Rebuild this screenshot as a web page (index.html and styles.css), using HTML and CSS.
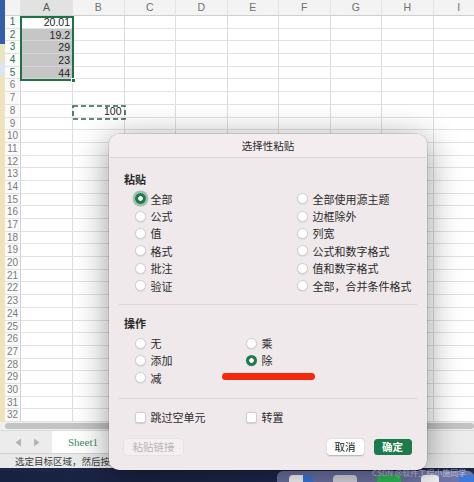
FILE: index.html
```html
<!DOCTYPE html>
<html lang="zh-CN">
<head>
<meta charset="utf-8">
<title>选择性粘贴</title>
<link rel="stylesheet" href="styles.css">
</head>
<body>
<div class="window">
  <div class="main">
    <div class="stripe"></div>
    <div class="grid">
      <div class="row head"><span></span><span class="on">A</span><span>B</span><span>C</span><span>D</span><span>E</span><span>F</span><span>G</span><span>H</span><span>I</span></div>
      <div class="row hl"><span>1</span><span>20.01</span><span></span><span></span><span></span><span></span><span></span><span></span><span></span><span></span></div>
      <div class="row hl sel"><span>2</span><span>19.2</span><span></span><span></span><span></span><span></span><span></span><span></span><span></span><span></span></div>
      <div class="row hl sel"><span>3</span><span>29</span><span></span><span></span><span></span><span></span><span></span><span></span><span></span><span></span></div>
      <div class="row hl sel"><span>4</span><span>23</span><span></span><span></span><span></span><span></span><span></span><span></span><span></span><span></span></div>
      <div class="row hl sel"><span>5</span><span>44</span><span></span><span></span><span></span><span></span><span></span><span></span><span></span><span></span></div>
      <div class="row"><span>6</span><span></span><span></span><span></span><span></span><span></span><span></span><span></span><span></span><span></span></div>
      <div class="row"><span>7</span><span></span><span></span><span></span><span></span><span></span><span></span><span></span><span></span><span></span></div>
      <div class="row"><span>8</span><span></span><span>100</span><span></span><span></span><span></span><span></span><span></span><span></span><span></span></div>
      <div class="row"><span>9</span><span></span><span></span><span></span><span></span><span></span><span></span><span></span><span></span><span></span></div>
      <div class="row"><span>10</span><span></span><span></span><span></span><span></span><span></span><span></span><span></span><span></span><span></span></div>
      <div class="row"><span>11</span><span></span><span></span><span></span><span></span><span></span><span></span><span></span><span></span><span></span></div>
      <div class="row"><span>12</span><span></span><span></span><span></span><span></span><span></span><span></span><span></span><span></span><span></span></div>
      <div class="row"><span>13</span><span></span><span></span><span></span><span></span><span></span><span></span><span></span><span></span><span></span></div>
      <div class="row"><span>14</span><span></span><span></span><span></span><span></span><span></span><span></span><span></span><span></span><span></span></div>
      <div class="row"><span>15</span><span></span><span></span><span></span><span></span><span></span><span></span><span></span><span></span><span></span></div>
      <div class="row"><span>16</span><span></span><span></span><span></span><span></span><span></span><span></span><span></span><span></span><span></span></div>
      <div class="row"><span>17</span><span></span><span></span><span></span><span></span><span></span><span></span><span></span><span></span><span></span></div>
      <div class="row"><span>18</span><span></span><span></span><span></span><span></span><span></span><span></span><span></span><span></span><span></span></div>
      <div class="row"><span>19</span><span></span><span></span><span></span><span></span><span></span><span></span><span></span><span></span><span></span></div>
      <div class="row"><span>20</span><span></span><span></span><span></span><span></span><span></span><span></span><span></span><span></span><span></span></div>
      <div class="row"><span>21</span><span></span><span></span><span></span><span></span><span></span><span></span><span></span><span></span><span></span></div>
      <div class="row"><span>22</span><span></span><span></span><span></span><span></span><span></span><span></span><span></span><span></span><span></span></div>
      <div class="row"><span>23</span><span></span><span></span><span></span><span></span><span></span><span></span><span></span><span></span><span></span></div>
      <div class="row"><span>24</span><span></span><span></span><span></span><span></span><span></span><span></span><span></span><span></span><span></span></div>
      <div class="row"><span>25</span><span></span><span></span><span></span><span></span><span></span><span></span><span></span><span></span><span></span></div>
      <div class="row"><span>26</span><span></span><span></span><span></span><span></span><span></span><span></span><span></span><span></span><span></span></div>
      <div class="row"><span>27</span><span></span><span></span><span></span><span></span><span></span><span></span><span></span><span></span><span></span></div>
      <div class="row"><span>28</span><span></span><span></span><span></span><span></span><span></span><span></span><span></span><span></span><span></span></div>
      <div class="row"><span>29</span><span></span><span></span><span></span><span></span><span></span><span></span><span></span><span></span><span></span></div>
      <div class="row"><span>30</span><span></span><span></span><span></span><span></span><span></span><span></span><span></span><span></span><span></span></div>
      <div class="row"><span>31</span><span></span><span></span><span></span><span></span><span></span><span></span><span></span><span></span><span></span></div>
      <div class="row"><span>32</span><span></span><span></span><span></span><span></span><span></span><span></span><span></span><span></span><span></span></div>
      <div class="selection"><div class="handle"></div></div>
      <svg class="marquee" width="54" height="15" viewBox="0 0 54 15"><rect x="1" y="1" width="52" height="13" fill="none" stroke="#2b6648" stroke-width="1.6" stroke-dasharray="5 3"/></svg>
    </div>
  </div>
  <div class="hscroll"><div class="thumb"></div></div>
  <div class="tabs">
    <svg class="arrow" width="7" height="9" viewBox="0 0 7 9"><path d="M6 0.5 L0.5 4.5 L6 8.5 Z" fill="#b4b4b4"/></svg>
    <svg class="arrow" width="7" height="9" viewBox="0 0 7 9"><path d="M1 0.5 L6.5 4.5 L1 8.5 Z" fill="#b4b4b4"/></svg>
    <div class="tab">Sheet1</div>
  </div>
  <div class="status">选定目标区域，然后按 Enter 或选择“粘贴”</div>
</div>
<div class="desktop">
  <div class="dock">
    <span class="icon i1"></span><span class="icon i2"></span><span class="icon i3"></span><span class="icon i4"></span><span class="icon i5"></span>
  </div>
</div>
<div class="watermark">CSDN @软件工程小施同学</div>

<div class="dialog">
  <div class="title">选择性粘贴</div>
  <div class="body">
    <div class="section s1">
      <div class="label">粘贴</div>
      <div class="opts paste">
        <div class="opt"><span class="radio on focus"></span>全部</div>
        <div class="opt"><span class="radio"></span>全部使用源主题</div>
        <div class="opt"><span class="radio"></span>公式</div>
        <div class="opt"><span class="radio"></span>边框除外</div>
        <div class="opt"><span class="radio"></span>值</div>
        <div class="opt"><span class="radio"></span>列宽</div>
        <div class="opt"><span class="radio"></span>格式</div>
        <div class="opt"><span class="radio"></span>公式和数字格式</div>
        <div class="opt"><span class="radio"></span>批注</div>
        <div class="opt"><span class="radio"></span>值和数字格式</div>
        <div class="opt"><span class="radio"></span>验证</div>
        <div class="opt"><span class="radio"></span>全部，合并条件格式</div>
      </div>
    </div>
    <div class="sep"></div>
    <div class="section s2">
      <div class="label">操作</div>
      <div class="opts ops">
        <div class="opt"><span class="radio"></span>无</div>
        <div class="opt"><span class="radio"></span>乘</div>
        <div class="opt"><span class="radio"></span>添加</div>
        <div class="opt"><span class="radio on"></span>除</div>
        <div class="opt"><span class="radio"></span>减</div>
      </div>
    </div>
    <div class="sep sep2"></div>
    <div class="section s3">
      <div class="opts ops">
        <div class="opt"><span class="check"></span>跳过空单元</div>
        <div class="opt"><span class="check"></span>转置</div>
      </div>
    </div>
  </div>
  <div class="buttons">
    <span class="btn link">粘贴链接</span>
    <span class="btn cancel">取消</span>
    <span class="btn ok">确定</span>
  </div>
  <div class="mark"></div>
</div>
</body>
</html>
```

FILE: styles.css
```css
* { box-sizing: border-box; margin: 0; padding: 0; }
html, body { width: 474px; height: 482px; overflow: hidden; }
body {
  position: relative;
  background: #1c2645;
  font-family: "Liberation Sans", "Noto Sans CJK SC", sans-serif;
}

/* spreadsheet window */
.window {
  height: 468px;
  display: flex;
  flex-direction: column;
  background: #fff;
  overflow: hidden;
}
.main { height: 422px; flex: none; display: flex; overflow: hidden; }
.stripe {
  width: 5px;
  flex: none;
  background: linear-gradient(#345ea8 0 44px, #ece3c3 44px 62px, #dce4ef 62px 76px, #eee3bb 76px);
}
.grid {
  position: relative;
  flex: none;
  width: 480px;
  display: flex;
  flex-direction: column;
}
.row { display: flex; height: 12.69px; flex: none; }
.row span {
  flex: none;
  width: 51.5px;
  height: 100%;
  border-right: 1px solid #dddddd;
  border-bottom: 1px solid #e2e2e2;
  font-size: 10.5px;
  line-height: 12px;
  text-align: right;
  padding-right: 2px;
  color: #1e1e1e;
  white-space: nowrap;
}
.row span:first-child {
  width: 16px;
  text-align: center;
  padding: 0;
  font-size: 10px;
  color: #7b7b7b;
  background: #fafafa;
  border-right-color: #d2d2d2;
}
.row span:nth-child(2) { width: 52px; }
.row.head { height: 16px; }
.row.head span {
  background: #f3f3f3;
  text-align: center;
  font-size: 10.5px;
  color: #707070;
  line-height: 15px;
  padding: 0;
  border-bottom-color: #cfcfcf;
  border-right-color: #e4e4e4;
}
.row.head span.on { background: #e2e2e2; color: #4b5e53; }
.row.hl span:first-child { color: #2f7352; }
.row.sel span:nth-child(2) { background: #c6c6c6; border-bottom-color: #d6d6d6; }

.selection {
  position: absolute;
  left: 15px;
  top: 15.5px;
  width: 53.5px;
  height: 65px;
  border: 2px solid #1f7146;
}
.handle {
  position: absolute;
  right: -4px;
  bottom: -4px;
  width: 5px;
  height: 5px;
  background: #1f7146;
  border: 1px solid #fff;
}
.marquee {
  position: absolute;
  left: 67px;
  top: 104.5px;
}

.hscroll {
  height: 8px;
  flex: none;
  background: #efefef;
  padding: 1px 0 1px 5px;
}
.thumb { height: 6px; background: #c3c3c3; border-radius: 3px; }

.tabs {
  height: 23px;
  flex: none;
  display: flex;
  align-items: center;
  background: #ececec;
  border-top: 1px solid #dadada;
}
.arrow { flex: none; margin-left: 11px; }
.arrow:first-child { margin-left: 15px; }
.tab {
  align-self: stretch;
  margin-left: 12px;
  width: 260px;
  background: #fff;
  padding-left: 16px;
  font-family: "Liberation Serif", serif;
  font-size: 11px;
  line-height: 22px;
  color: #3b8c6c;
}

.status {
  height: 15px;
  flex: none;
  background: #e9e9e9;
  border-top: 1px solid #d3d3d3;
  padding-left: 15px;
  font-family: "Noto Sans CJK SC", sans-serif;
  font-size: 9.5px;
  line-height: 14px;
  color: #3a3a3a;
  white-space: nowrap;
}

/* desktop strip */
.desktop {
  height: 14px;
  background: linear-gradient(90deg, #172141, #232c55);
}
.dock {
  margin-left: 277px;
  margin-top: 3px;
  height: 11px;
  display: flex;
  gap: 20px;
  padding: 4px 0 0 12px;
  background: rgba(175, 180, 235, 0.55);
  border-radius: 6px 6px 0 0;
}
.icon { width: 24px; height: 7px; border-radius: 4px 4px 0 0; flex: none; }
.i1 { background: linear-gradient(90deg, #fff 0 60%, #3a7be0 60%); }
.i2 { background: #dcdce8; }
.i3 { background: #2fbf5a; }
.i4 { background: #f4f4f4; width: 18px; }
.i5 { background: #3e78d8; }

.watermark {
  position: absolute;
  left: 372px;
  top: 467px;
  font-family: "Noto Sans CJK SC", sans-serif;
  font-size: 8px;
  line-height: 11px;
  color: rgba(225, 225, 238, 0.72);
  white-space: nowrap;
}

/* dialog */
.dialog {
  position: absolute;
  left: 109px;
  top: 134px;
  width: 318px;
  height: 336px;
  border-radius: 10px;
  background: #efe9eb;
  box-shadow: 0 6px 34px rgba(0, 0, 0, 0.42), 0 0 0 0.5px rgba(0, 0, 0, 0.2);
  overflow: hidden;
  font-family: "Noto Sans CJK SC", sans-serif;
  font-size: 11px;
  color: #2b2b2b;
}
.title {
  height: 24px;
  line-height: 23px;
  text-align: center;
  font-size: 10.5px;
  background: #f3edef;
  border-bottom: 1px solid #ddd6d8;
}
.body { padding: 0 10px; }
.label { font-weight: 700; line-height: 14px; padding-left: 5px; }
.s1 { padding-top: 14px; }
.s2 { padding-top: 11px; }
.s3 { padding-top: 10px; }
.opts { display: grid; padding-left: 16px; }
.label + .opts { margin-top: 4px; }
.opts.paste { grid-template-columns: 162px 1fr; }
.opts.ops { grid-template-columns: 111px 1fr; }
.opt {
  display: flex;
  align-items: center;
  gap: 4.5px;
  height: 17.4px;
  white-space: nowrap;
}
.radio {
  flex: none;
  width: 11px;
  height: 11px;
  border-radius: 50%;
  background: #fff;
  border: 0.5px solid #d2cccf;
  box-shadow: 0 0.5px 1px rgba(0, 0, 0, 0.12);
}
.radio.on {
  border: none;
  background: radial-gradient(circle, #fff 0 2px, #1e7b4b 2.6px);
}
.radio.focus { box-shadow: 0 0 0 2.5px rgba(40, 130, 85, 0.38); }
.check {
  flex: none;
  width: 11px;
  height: 11px;
  border-radius: 2.5px;
  background: #fff;
  border: 0.5px solid #d2cccf;
  box-shadow: 0 0.5px 1px rgba(0, 0, 0, 0.12);
}
.sep { height: 1px; background: #dcd5d7; margin-top: 10px; }
.sep2 { margin-top: 11px; }

.buttons {
  display: flex;
  align-items: center;
  margin-top: 13.5px;
  padding: 0 15.5px 0 15px;
}
.btn {
  height: 15.5px;
  line-height: 15.5px;
  text-align: center;
  font-size: 10.5px;
  border-radius: 3.5px;
}
.btn.link {
  width: 59px;
  background: #f4f0f1;
  color: #bab4b6;
  box-shadow: 0 0 0 0.5px rgba(0, 0, 0, 0.06);
}
.btn.cancel {
  width: 37px;
  margin-left: auto;
  background: #fff;
  color: #222;
  box-shadow: 0 0.5px 1.5px rgba(0, 0, 0, 0.25);
}
.btn.ok {
  width: 38px;
  margin-left: 10px;
  background: #1b7b4b;
  color: #fff;
  font-weight: 700;
}
.mark {
  position: absolute;
  left: 113px;
  top: 239px;
  width: 93px;
  height: 7px;
  border-radius: 3.5px;
  background: #f4290b;
}
```
